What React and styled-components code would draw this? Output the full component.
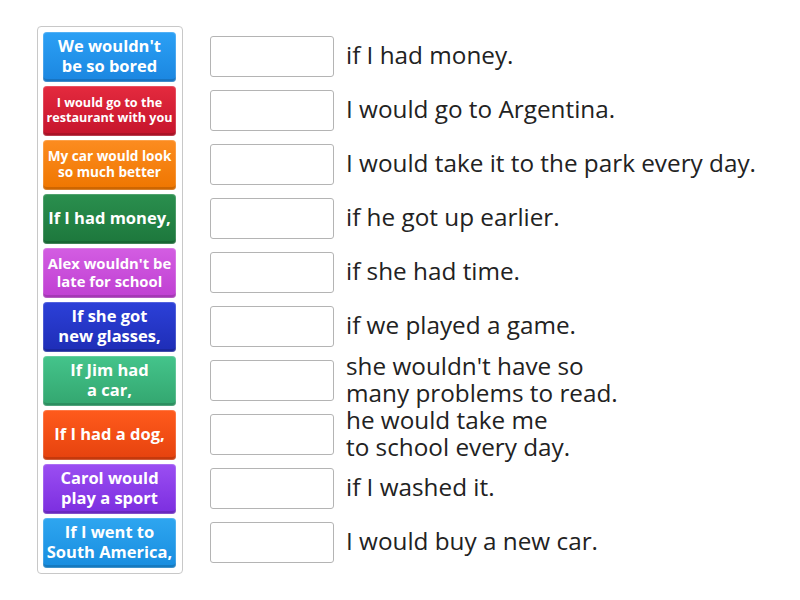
import React from "react";
import styled, { createGlobalStyle } from "styled-components";

const GlobalStyle = createGlobalStyle`
  body {
    margin: 0;
    background: #fff;
    font-family: "Open Sans", "Noto Sans", sans-serif;
  }
`;

const tiles = [
  { text: ["We wouldn't", "be so bored"], top: "#2ba0f5", bottom: "#1b86e0", size: 16.5 },
  { text: ["I would go to the", "restaurant with you"], top: "#e42a3e", bottom: "#c5142c", size: 12.6 },
  { text: ["My car would look", "so much better"], top: "#fc8c20", bottom: "#ef7600", size: 13.6 },
  { text: ["If I had money,"], top: "#2a8f4e", bottom: "#1d773c", size: 16.5 },
  { text: ["Alex wouldn't be", "late for school"], top: "#d35de2", bottom: "#bf3fd2", size: 14.8 },
  { text: ["If she got", "new glasses,"], top: "#2c40d8", bottom: "#1e2db6", size: 16.5 },
  { text: ["If Jim had", "a car,"], top: "#44c48b", bottom: "#33a66f", size: 16.5 },
  { text: ["If I had a dog,"], top: "#ff5b1c", bottom: "#e5420e", size: 16.5 },
  { text: ["Carol would", "play a sport"], top: "#9b4ef2", bottom: "#7b2edf", size: 16.5 },
  { text: ["If I went to", "South America,"], top: "#2ea6f0", bottom: "#188ddf", size: 16.5 },
];

const answers = [
  ["if I had money."],
  ["I would go to Argentina."],
  ["I would take it to the park every day."],
  ["if he got up earlier."],
  ["if she had time."],
  ["if we played a game."],
  ["she wouldn't have so", "many problems to read."],
  ["he would take me", "to school every day."],
  ["if I washed it."],
  ["I would buy a new car."],
];

const App = () => {
  return (
    <>
      <GlobalStyle />
      <Page>
        <TileBank>
          {tiles.map((t, i) => (
            <Tile key={i} $top={t.top} $bottom={t.bottom} $size={t.size}>
              {t.text.map((line, j) => (
                <span key={j}>{line}</span>
              ))}
            </Tile>
          ))}
        </TileBank>
        <Answers>
          {answers.map((a, i) => (
            <Row key={i}>
              <DropBox />
              <Sentence>
                {a.map((line, j) => (
                  <span key={j}>{line}</span>
                ))}
              </Sentence>
            </Row>
          ))}
        </Answers>
      </Page>
    </>
  );
};

const Page = styled.div`
  display: flex;
  align-items: flex-start;
  padding: 26px 0 0 37px;
  gap: 27px;
`;

const TileBank = styled.div`
  width: 146px;
  height: 548px;
  box-sizing: border-box;
  border: 1px solid #c8c8c8;
  border-radius: 4px;
  padding: 5px 6px 0 5px;
  display: flex;
  flex-direction: column;
  gap: 4px;
`;

const Tile = styled.div`
  height: 50px;
  box-sizing: border-box;
  border-radius: 4px;
  background: linear-gradient(${(p) => p.$top}, ${(p) => p.$bottom});
  box-shadow: inset 0 0 0 1px rgba(255, 255, 255, 0.18),
    inset 0 -3px 0 rgba(0, 0, 0, 0.14);
  color: #fff;
  font-weight: 700;
  font-size: ${(p) => p.$size}px;
  line-height: ${(p) => Math.round(p.$size * 1.2)}px;
  display: flex;
  flex-direction: column;
  align-items: center;
  justify-content: center;
  text-align: center;
  white-space: nowrap;
  padding-bottom: 3px;
`;

const Answers = styled.div`
  display: flex;
  flex-direction: column;
  padding-top: 3px;
`;

const Row = styled.div`
  height: 54px;
  display: flex;
  align-items: center;
  gap: 12px;
`;

const DropBox = styled.div`
  width: 124px;
  height: 41px;
  flex-shrink: 0;
  box-sizing: border-box;
  border: 1px solid #b4b4b4;
  border-radius: 3px;
  background: #fff;
`;

const Sentence = styled.div`
  display: flex;
  flex-direction: column;
  font-size: 24.3px;
  line-height: 27px;
  color: #222;
  white-space: nowrap;
  padding-bottom: 3px;
`;

export default App;
